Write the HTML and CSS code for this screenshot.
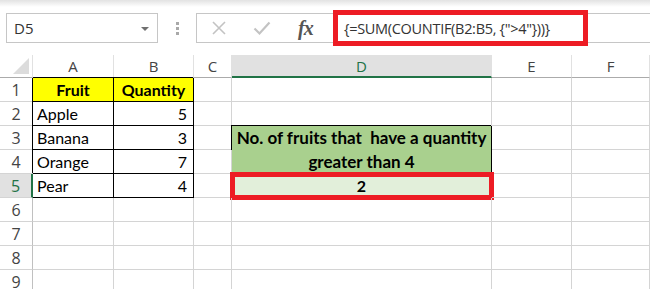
FILE: index.html
```html
<!DOCTYPE html>
<html lang="en">
<head>
  <meta charset="UTF-8">
  <meta name="viewport" content="width=device-width, initial-scale=1.0">
  <title>COUNTIF array formula</title>
  <link rel="stylesheet" href="styles.css">
</head>
<body>
  <div class="toolbar">
    <div class="name-box">
      <span>D5</span>
      <span class="caret"></span>
    </div>
    <div class="grip"><i></i><i></i><i></i></div>
    <div class="formula-bar">
      <div class="fx-buttons">
        <svg class="icon" width="16" height="16" viewBox="0 0 16 16">
          <path d="M2 2 L14 14 M14 2 L2 14" stroke="#c3c3c3" stroke-width="1.6" fill="none"/>
        </svg>
        <svg class="icon" width="18" height="16" viewBox="0 0 18 16">
          <path d="M1.5 8.5 L6.5 13.5 L16.5 2.5" stroke="#c3c3c3" stroke-width="2.2" fill="none"/>
        </svg>
        <span class="fx">fx</span>
      </div>
      <div class="formula">
        <span class="formula-text">{=SUM(COUNTIF(B2:B5, {"&gt;4"}))}</span>
      </div>
    </div>
  </div>

  <div class="sheet">
    <div class="hd corner"></div>
    <div class="hd">A</div>
    <div class="hd">B</div>
    <div class="hd">C</div>
    <div class="hd active-col">D</div>
    <div class="hd">E</div>
    <div class="hd">F</div>

    <div class="rh">1</div>
    <div class="c b yellow bold center">Fruit</div>
    <div class="c b yellow bold center">Quantity</div>
    <div class="c"></div><div class="c"></div><div class="c"></div><div class="c"></div>

    <div class="rh">2</div>
    <div class="c b">Apple</div>
    <div class="c b num">5</div>
    <div class="c"></div><div class="c"></div><div class="c"></div><div class="c"></div>

    <div class="rh">3</div>
    <div class="c b">Banana</div>
    <div class="c b num">3</div>
    <div class="c"></div>
    <div class="c b merged">No. of fruits that&nbsp; have a quantity greater than 4</div>
    <div class="c"></div><div class="c"></div>

    <div class="rh">4</div>
    <div class="c b">Orange</div>
    <div class="c b num">7</div>
    <div class="c"></div>
    <div class="c"></div><div class="c"></div>

    <div class="rh active-row">5</div>
    <div class="c b first-sel">Pear</div>
    <div class="c b num">4</div>
    <div class="c"></div>
    <div class="c result bold center">2</div>
    <div class="c"></div><div class="c"></div>

    <div class="rh">6</div>
    <div class="c"></div><div class="c"></div><div class="c"></div><div class="c"></div><div class="c"></div><div class="c"></div>
    <div class="rh">7</div>
    <div class="c"></div><div class="c"></div><div class="c"></div><div class="c"></div><div class="c"></div><div class="c"></div>
    <div class="rh">8</div>
    <div class="c"></div><div class="c"></div><div class="c"></div><div class="c"></div><div class="c"></div><div class="c"></div>
    <div class="rh">9</div>
    <div class="c"></div><div class="c"></div><div class="c"></div><div class="c"></div><div class="c"></div><div class="c"></div>
  </div>
</body>
</html>
```

FILE: styles.css
```css
body {
  margin: 0;
  padding: 0;
  background: #fff;
  overflow: hidden;
  font-family: "Lato", "Liberation Sans", sans-serif;
  color: #000;
}

/* top bar: name box + formula bar */
.toolbar {
  height: 55px;
  box-sizing: border-box;
  padding: 13px 0 0 6px;
  display: flex;
  align-items: flex-start;
  background: linear-gradient(#e2e2e2, #fff 7px);
}

.name-box {
  width: 152px;
  height: 30px;
  box-sizing: border-box;
  border: 1px solid #c6c6c6;
  background: #fff;
  display: flex;
  align-items: center;
  justify-content: space-between;
  padding: 0 8px 0 7px;
  font-family: "Open Sans", sans-serif;
  font-size: 15px;
  color: #333;
}

.caret {
  width: 0;
  height: 0;
  border-left: 4px solid transparent;
  border-right: 4px solid transparent;
  border-top: 4px solid #707070;
  margin-top: 2px;
}

.grip {
  width: 38px;
  height: 30px;
  display: flex;
  flex-direction: column;
  align-items: center;
  justify-content: center;
  gap: 2px;
}

.grip i {
  width: 3px;
  height: 3px;
  background: #a9a9a9;
}

.formula-bar {
  flex: 1;
  height: 30px;
  box-sizing: border-box;
  border: 1px solid #c6c6c6;
  border-right: none;
  background: #fff;
  display: flex;
  align-items: center;
}

.fx-buttons {
  width: 136px;
  display: flex;
  align-items: center;
  padding-left: 14px;
  gap: 26px;
  box-sizing: border-box;
}

.fx {
  font-family: "Liberation Serif", serif;
  font-style: italic;
  font-weight: bold;
  font-size: 20px;
  color: #555;
  letter-spacing: -1px;
  margin-left: 1px;
}

.formula {
  flex: 1;
  height: 28px;
  display: flex;
  align-items: center;
}

.formula-text {
  display: inline-flex;
  align-items: center;
  height: 36px;
  width: 255px;
  box-sizing: border-box;
  border: 5px solid #ed1c24;
  padding-left: 6px;
  font-family: "Open Sans", sans-serif;
  font-size: 14.5px;
  color: #333;
  letter-spacing: -0.3px;
  white-space: nowrap;
}

/* sheet grid */
.sheet {
  display: grid;
  grid-template-columns: 33px 81px 80px 38px 260px 80px 1fr;
  grid-template-rows: 23px repeat(9, 24px);
}

.sheet > div {
  box-sizing: border-box;
  border-right: 1px solid #d4d4d4;
  border-bottom: 1px solid #d4d4d4;
  font-size: 16px;
  display: flex;
  align-items: center;
  white-space: nowrap;
}

.hd {
  justify-content: center;
  font-family: "Open Sans", sans-serif;
  font-size: 15px !important;
  color: #444;
  border-bottom-color: #ababab !important;
  border-right-color: #e1e1e1 !important;
}

.corner {
  position: relative;
}

.corner::after {
  content: "";
  position: absolute;
  right: 3px;
  bottom: 3px;
  width: 16px;
  height: 16px;
  background: #dcdcdc;
  clip-path: polygon(100% 0, 100% 100%, 0 100%);
}

.active-col {
  background: #e1e1e1;
  color: #217346 !important;
  border-bottom: 2px solid #217346 !important;
}

.rh {
  justify-content: center;
  font-family: "Open Sans", sans-serif;
  color: #444;
  border-right-color: #c0c0c0 !important;
}

.active-row {
  background: #e1e1e1;
  color: #217346 !important;
  border-right: 2px solid #217346 !important;
}

.c {
  padding: 0 4px;
}

.b {
  border-right-color: #000 !important;
  border-bottom-color: #000 !important;
  box-shadow: -1px -1px 0 #000;
}

.b.first-sel {
  box-shadow: 0 -1px 0 #000;
}

.yellow {
  background: #ffff00;
}

.bold {
  font-weight: bold;
}

.center {
  justify-content: center;
}

.num {
  justify-content: flex-end;
  padding-right: 6px;
}

.merged {
  grid-row: span 2;
  background: #a9d08e;
  font-weight: bold;
  font-size: 17px !important;
  white-space: normal !important;
  text-align: center;
  justify-content: center;
  line-height: 24px;
  padding: 0 2px;
}

.result {
  background: #e2efda;
  outline: 5px solid #ed1c24;
  outline-offset: -3px;
}
```
